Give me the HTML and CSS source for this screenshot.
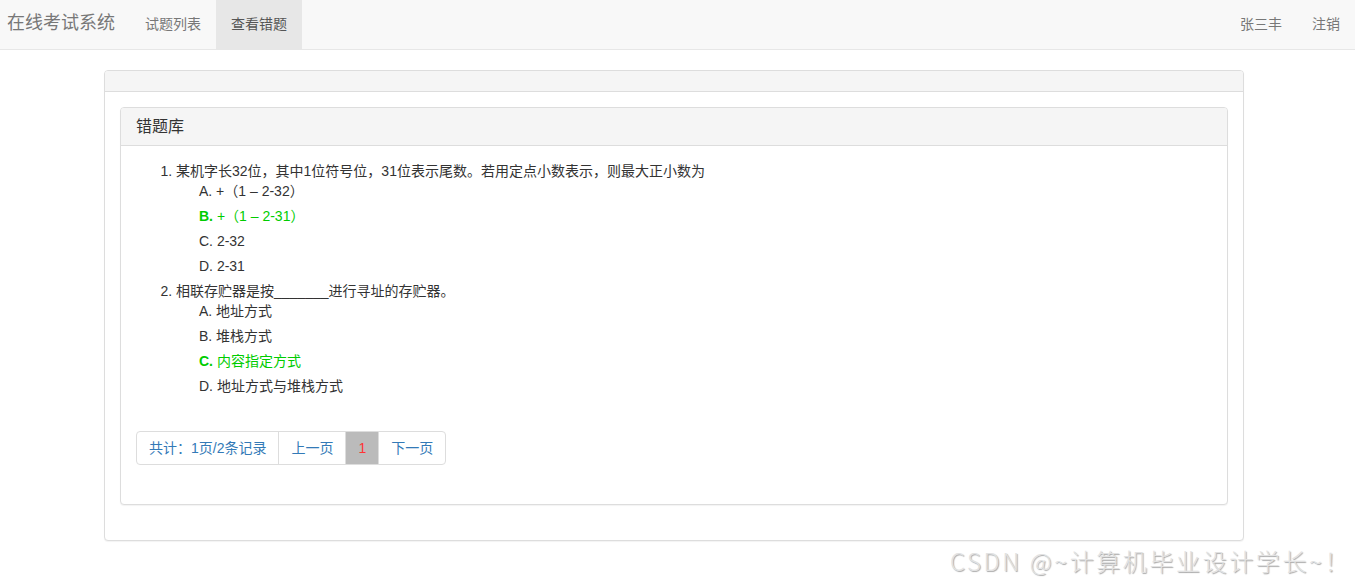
FILE: index.html
```html
<!DOCTYPE html>
<html lang="zh">
<head>
<meta charset="utf-8">
<title>查看错题</title>
<link rel="stylesheet" href="styles.css">
</head>
<body>
<nav class="navbar">
  <a class="brand" href="#">在线考试系统</a>
  <ul class="nav">
    <li><a href="#">试题列表</a></li>
    <li class="active"><a href="#">查看错题</a></li>
  </ul>
  <ul class="nav nav-right">
    <li><a href="#">张三丰</a></li>
    <li><a href="#">注销</a></li>
  </ul>
</nav>
<div class="container">
  <div class="panel">
    <div class="panel-heading empty"></div>
    <div class="panel-body">
      <div class="panel inner">
        <div class="panel-heading"><h3 class="panel-title">错题库</h3></div>
        <div class="panel-body">
          <ol class="questions">
            <li>某机字长32位，其中1位符号位，31位表示尾数。若用定点小数表示，则最大正小数为
              <div class="opt">A. +（1 – 2-32）</div>
              <div class="opt right"><b>B.</b> +（1 – 2-31）</div>
              <div class="opt">C. 2-32</div>
              <div class="opt">D. 2-31</div>
            </li>
            <li>相联存贮器是按_______进行寻址的存贮器。
              <div class="opt">A. 地址方式</div>
              <div class="opt">B. 堆栈方式</div>
              <div class="opt right"><b>C.</b> 内容指定方式</div>
              <div class="opt">D. 地址方式与堆栈方式</div>
            </li>
          </ol>
          <ul class="pagination">
            <li><a href="#">共计：1页/2条记录</a></li>
            <li><a href="#">上一页</a></li>
            <li class="current"><a href="#">1</a></li>
            <li><a href="#">下一页</a></li>
          </ul>
        </div>
      </div>
    </div>
  </div>
</div>
<div class="watermark">CSDN @~计算机毕业设计学长~！</div>
</body>
</html>
```
FILE: styles.css
```css
* { box-sizing: border-box; }
html, body { margin: 0; padding: 0; }
body {
  font-family: "Liberation Sans", "Noto Sans CJK SC", sans-serif;
  font-size: 14px;
  line-height: 20px;
  color: #333;
  background: #fff;
  position: relative;
  min-height: 585px;
}
a { text-decoration: none; }
ul, ol { margin: 0; padding: 0; }

.navbar {
  height: 50px;
  background: #f8f8f8;
  border-bottom: 1px solid #e7e7e7;
  display: flex;
  align-items: flex-start;
  margin-bottom: 20px;
}
.brand {
  display: block;
  font-size: 18px;
  line-height: 20px;
  padding: 13px 15px 16px 7px;
  color: #777;
}
.nav {
  list-style: none;
  display: flex;
}
.nav li a {
  display: block;
  padding: 14px 15px 15px;
  line-height: 20px;
  color: #777;
}
.nav li.active a {
  background: #e7e7e7;
  color: #555;
}
.nav-right { margin-left: auto; }

.container {
  width: 1140px;
  margin-left: 104px;
}
.panel {
  border: 1px solid #ddd;
  border-radius: 4px;
  background: #fff;
  box-shadow: 0 1px 1px rgba(0,0,0,.05);
}
.panel-heading {
  background: #f5f5f5;
  border-bottom: 1px solid #ddd;
  padding: 10px 15px;
  border-radius: 3px 3px 0 0;
}
.panel-heading.empty { height: 21px; padding: 0; }
.panel-body { padding: 15px; }
.panel.inner { margin-bottom: 20px; }
.panel-title {
  margin: 0;
  font-size: 16px;
  font-weight: normal;
  line-height: 17px;
  color: #333;
}

.questions {
  padding-left: 40px;
  margin-bottom: 0;
  color: #333;
}
.opt {
  padding-left: 23px;
  margin-bottom: 5px;
  line-height: 20px;
}
.opt.right { color: #00cc00; }
.opt.right b { font-weight: bold; }

.pagination {
  list-style: none;
  display: flex;
  width: max-content;
  margin: 35px 0 24px;
  border-radius: 4px;
}
.pagination li a {
  display: block;
  padding: 6px 12px;
  height: 34px;
  line-height: 20px;
  color: #337ab7;
  border: 1px solid #ddd;
  margin-left: -1px;
  background: #fff;
}
.pagination li:first-child a {
  margin-left: 0;
  border-radius: 4px 0 0 4px;
}
.pagination li:last-child a { border-radius: 0 4px 4px 0; }
.pagination li.current a {
  background: #bbb;
  color: #ff3333;
}

.watermark {
  position: absolute;
  left: 950px;
  top: 545px;
  font-family: "Noto Sans CJK SC", sans-serif;
  font-size: 24px;
  font-weight: 300;
  line-height: 32px;
  color: #e2e2e2;
  text-shadow: 1px 1px 1px #a8a8a8;
  white-space: nowrap;
  letter-spacing: 2.6px;
}
```
